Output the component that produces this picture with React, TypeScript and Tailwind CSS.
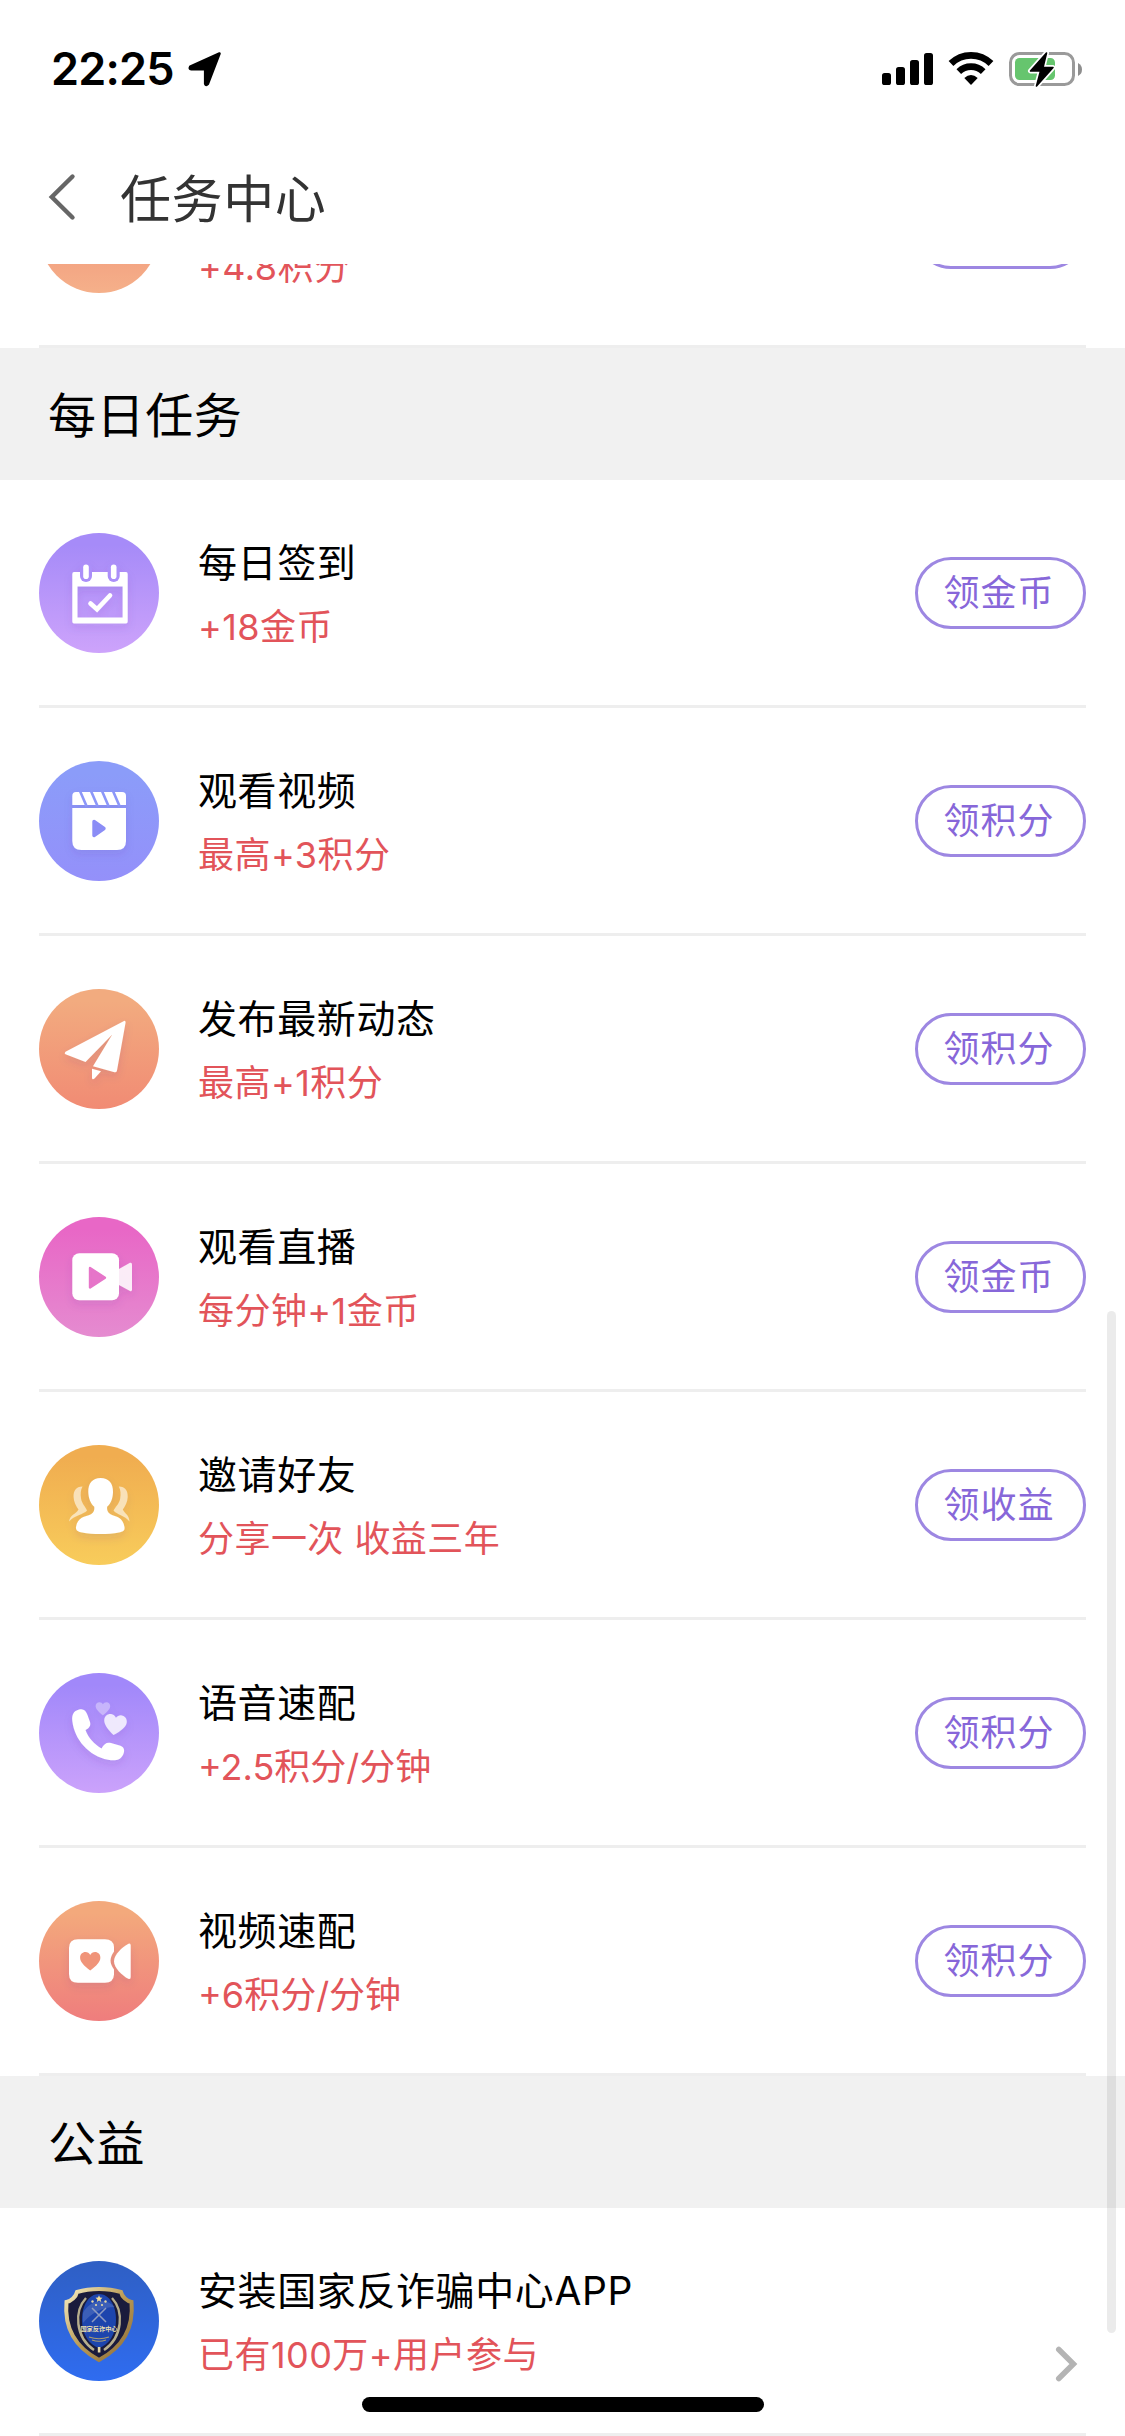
import React from 'react';

interface Task {
    id: string;
    title: string;
    reward: string;
    action?: string;
    compact?: boolean;
    icon: React.ReactNode;
}

interface IconCircleProps {
    id: string;
    from: string;
    to: string;
    children?: React.ReactNode;
}

const HEART = 'M12 21C5 15.5 1 11.5 1 7C1 3.5 3.6 1 6.8 1C9 1 11 2.2 12 4C13 2.2 15 1 17.2 1C20.4 1 23 3.5 23 7C23 11.5 19 15.5 12 21Z';

const IconCircle: React.FC<IconCircleProps> = ({ id, from, to, children }) => (
    <svg viewBox="0 0 120 120" className="w-[120px] h-[120px] shrink-0">
        <defs>
            <linearGradient id={`bg-${id}`} x1="0" y1="0" x2="0" y2="1">
                <stop offset="0.1" stopColor={from} />
                <stop offset="1" stopColor={to} />
            </linearGradient>
            <filter id={`shadow-${id}`} x="-30%" y="-30%" width="160%" height="160%">
                <feDropShadow dx="0" dy="4" stdDeviation="4" floodColor="#5a2a9a" floodOpacity="0.12" />
            </filter>
        </defs>
        <circle cx="60" cy="60" r="60" fill={`url(#bg-${id})`} />
        <g filter={`url(#shadow-${id})`}>{children}</g>
    </svg>
);

const SignInIcon = () => (
    <IconCircle id="sign" from="#a68bf8" to="#cda3fb">
        <path
            fillRule="evenodd"
            fill="#fff"
            d="M35 39H87Q88.7 39 88.7 41V88.5Q88.7 90.4 87 90.4H35Q33.3 90.4 33.3 88.5V41Q33.3 39 35 39ZM38.5 53.5V84.6H83.6V53.5Z"
        />
        <rect x="41" y="30" width="12" height="19" rx="6" fill="#ab8ff9" />
        <rect x="68.7" y="30" width="12" height="19" rx="6" fill="#ab8ff9" />
        <rect x="44.2" y="31.5" width="5.6" height="14.5" rx="2.8" fill="#fff" />
        <rect x="71.9" y="31.5" width="5.6" height="14.5" rx="2.8" fill="#fff" />
        <path d="M51.5 70.5L58 76.3L71 62.5" fill="none" stroke="#fff" strokeWidth="4.6" strokeLinecap="round" />
    </IconCircle>
);

const ClapperIcon = () => (
    <IconCircle id="clapper" from="#8b9cf9" to="#9490fa">
        <path d="M33.3 47H87V80Q87 89 78 89H42.5Q33.3 89 33.3 80Z" fill="#fff" />
        <path d="M37 31H83Q87 31 87 35V44H33.3V35Q33.3 31 37 31Z" fill="#fff" />
        <path d="M41 30L47.5 45M52 30L58.5 45M63 30L69.5 45M74 30L80.5 45" stroke="#8c97f9" strokeWidth="2.6" />
        <path d="M55 60.5L65 67.5L55 74.5Z" fill="#8b8df6" stroke="#8b8df6" strokeWidth="3.4" strokeLinejoin="round" />
    </IconCircle>
);

const PlaneIcon = () => (
    <IconCircle id="plane" from="#f2ab7f" to="#f18b74">
        <path
            d="M85 32L26.5 62.8Q24.8 64.3 26.5 65.3L46.5 73L73.3 45.5L54 77.3L75.5 83.3Q77.6 83.6 78 81.5L86.6 33.5Q86.6 31.4 85 32Z"
            fill="#fff"
        />
        <path d="M53 79.8L62 82.2L55.5 89.6Q53.3 91.3 53 89Z" fill="#fff" />
    </IconCircle>
);

const LiveIcon = () => (
    <IconCircle id="live" from="#e867c6" to="#e58bd0">
        <path d="M80 52L91 45.8Q93 45.2 93 47.5V72.5Q93 74.8 91 74L80 68Z" fill="#fff" opacity="0.86" />
        <rect x="33.3" y="36.3" width="46.7" height="47" rx="7" fill="#fff" />
        <path d="M51 51L66 60.7L51 70.4Z" fill="#e674c9" stroke="#e674c9" strokeWidth="2.4" strokeLinejoin="round" />
    </IconCircle>
);

const FriendsIcon = () => (
    <IconCircle id="friends" from="#f0ad50" to="#f8cc5b">
        <g fill="#fff" opacity="0.58">
            <path d="M43.5 41.5C37 41.5 34.3 46 34.6 52C34.8 57 37 61 39.5 64.5C37.5 69 31 69.5 30 76.5C35 70.5 44.5 69.5 48 65.5C46.8 62 42.8 58.8 42 53.5C41.4 49 41.5 45 43.5 41.5Z" />
            <path d="M79.8 41.5C86.3 41.5 89 46 88.7 52C88.5 57 86.3 61 83.8 64.5C85.8 69 90 69.5 90.5 76.5C86 70.5 77.5 69.5 74.6 65.5C76.2 62 80.4 58.8 81.2 53.5C81.9 49 81.8 45 79.8 41.5Z" />
        </g>
        <path
            d="M61.6 33C53.5 33 49 38.5 49.3 47C49.5 53 51.5 58.5 55.3 61.8C55.6 65 55 67.5 52 69.3C46 72 38.5 72 37 82C36.5 86 39.5 86.8 43 87.5C54 89.5 69 89.5 80 87.5C84 86.8 86 86 85.5 82C84 72 77 72 71.5 69.3C68.5 67.5 67.8 65 68.1 61.8C72 58.5 73.8 53 74 47C74.3 38.5 69.7 33 61.6 33Z"
            fill="#fff"
        />
    </IconCircle>
);

const VoiceMatchIcon = () => (
    <IconCircle id="voice" from="#a188fa" to="#cba2fb">
        <path
            d="M40 36.5C44.5 35.2 47 37.5 48.5 42L51 49C52 52.5 50.5 55 46.5 57C49.5 65 55 71 62.5 75.5C65 70.5 68 69 72 70L81.5 72.8C85.5 74.3 86 78 84 82C81 87.5 76 88 69 86.8C50 83 35.5 67 33.3 48C32.7 41.5 34.5 38 40 36.5Z"
            fill="#fff"
        />
        <path d={HEART} transform="translate(63.5 40.5) rotate(8 12 12) scale(1.03)" fill="#fff" opacity="0.8" />
        <path d={HEART} transform="translate(56 28.5) scale(0.66)" fill="#fff" opacity="0.35" />
    </IconCircle>
);

const VideoMatchIcon = () => (
    <IconCircle id="video" from="#f3a97c" to="#ef7d7d">
        <path
            d="M39 38.2H66Q74.5 38.2 75 46V50.5Q71.5 55.5 71.5 59.5T75 68.5V73.5Q74.5 81.8 66 81.8H39Q30 81.8 30 73V47Q30 38.2 39 38.2Z"
            fill="#fff"
        />
        <path d="M89.5 42.7Q91.7 41.8 91.7 44.5V76Q91.7 78.8 89.3 77.8C83 74.5 75 66.5 75 60.2S83 46 89.5 42.7Z" fill="#fff" />
        <path d={HEART} transform="translate(40.2 50.2) scale(0.92)" fill="#f09479" />
    </IconCircle>
);

const AntiFraudIcon = () => (
    <svg viewBox="0 0 120 120" className="w-[120px] h-[120px] shrink-0">
        <defs>
            <linearGradient id="fraud-bg" x1="0" y1="0" x2="0" y2="1">
                <stop offset="0" stopColor="#2f5fc4" />
                <stop offset="1" stopColor="#2f6cf0" />
            </linearGradient>
            <linearGradient id="fraud-gold" x1="0" y1="0" x2="1" y2="1">
                <stop offset="0" stopColor="#f6ecc0" />
                <stop offset="0.5" stopColor="#b99a55" />
                <stop offset="1" stopColor="#8a6a38" />
            </linearGradient>
        </defs>
        <circle cx="60" cy="60" r="60" fill="url(#fraud-bg)" />
        <path
            d="M60 28C52 28 43 29.5 38 31C37 36 32 40 27.5 41C25.5 63 32 84 60 99C88 84 94.5 63 92.5 41C88 40 83 36 82 31C77 29.5 68 28 60 28Z"
            fill="#1a1b3c"
            stroke="url(#fraud-gold)"
            strokeWidth="4"
        />
        <path d="M60 33C50 33 43 44 43 59C43 73 50 84 60 87C70 84 77 73 77 59C77 44 70 33 60 33Z" fill="#1d45ad" />
        <path d="M44 52C50 40 66 36 76 46C64 46 52 52 44 62Z" fill="#fff" opacity="0.14" />
        <path d="M47 37C35 50 36 76 55 89M73 37C85 50 84 76 65 89" fill="none" stroke="#b7ae8c" strokeWidth="2.4" />
        <path d="M53 47L67 61M67 47L53 61" stroke="#8f9cc0" strokeWidth="1.5" />
        <path d="M60 34.2L61 36.6L63.5 36.8L61.6 38.4L62.2 41L60 39.6L57.8 41L58.4 38.4L56.5 36.8L59 36.6Z" fill="#f3df9a" />
        <g fill="#e3d7a8">
            <circle cx="53.5" cy="40.5" r="1.2" />
            <circle cx="66.5" cy="40.5" r="1.2" />
            <circle cx="57" cy="44" r="1.1" />
            <circle cx="63" cy="44" r="1.1" />
            <rect x="58.8" y="86" width="2.6" height="5.5" />
        </g>
        <text x="60" y="70" textAnchor="middle" fontSize="6.2" fontWeight="700" fill="#e9dfae">国家反诈中心</text>
        <path d="M50 76Q60 79.5 70 76M53 79Q60 81.5 67 79" fill="none" stroke="#a99d74" strokeWidth="1.2" />
    </svg>
);

const dailyTasks: Task[] = [
    { id: 'sign', title: '每日签到', reward: '+18金币', action: '领金币', icon: <SignInIcon /> },
    { id: 'watch', title: '观看视频', reward: '最高+3积分', action: '领积分', icon: <ClapperIcon /> },
    { id: 'post', title: '发布最新动态', reward: '最高+1积分', action: '领积分', icon: <PlaneIcon /> },
    { id: 'live', title: '观看直播', reward: '每分钟+1金币', action: '领金币', icon: <LiveIcon /> },
    { id: 'invite', title: '邀请好友', reward: '分享一次 收益三年', action: '领收益', icon: <FriendsIcon /> },
    { id: 'voice', title: '语音速配', reward: '+2.5积分/分钟', action: '领积分', compact: true, icon: <VoiceMatchIcon /> },
    { id: 'video', title: '视频速配', reward: '+6积分/分钟', action: '领积分', compact: true, icon: <VideoMatchIcon /> },
];

const StatusBar = () => (
    <div className="flex h-[132px] shrink-0 items-start justify-between pt-[51px] pl-[51px] pr-[42px]">
        <div className="flex items-start">
            <span className="w-[137px] text-[45px] leading-[36px] font-semibold tracking-[-0.8px] text-black">22:25</span>
            <svg viewBox="0 0 34 36" className="w-[34px] h-[36px]">
                <path d="M31.5 2.5L2.2 15.8Q1 18 3.2 18.2H16.5Q17.2 18.3 17.2 19V32.8Q18 35 19.8 33Z" fill="#000" stroke="#000" strokeWidth="2.6" strokeLinejoin="round" />
            </svg>
        </div>
        <svg viewBox="0 0 201 38" className="w-[201px] h-[38px]">
            <rect x="0" y="22" width="9" height="12" rx="2.6" />
            <rect x="14" y="16" width="9" height="18" rx="2.6" />
            <rect x="28" y="9" width="9" height="25" rx="2.6" />
            <rect x="42" y="2" width="9" height="32" rx="2.6" />
            <path d="M69 12.5A28.5 28.5 0 0 1 109 12.5" fill="none" stroke="#000" strokeWidth="6.8" />
            <path d="M76.8 20.6A17.5 17.5 0 0 1 101.2 20.6" fill="none" stroke="#000" strokeWidth="6.6" />
            <path d="M82.3 27Q89 21 95.7 27L89 34Z" />
            <rect x="128.5" y="2.5" width="63" height="31" rx="9" fill="none" stroke="#9a9a9a" strokeWidth="3" />
            <path d="M196 12Q200 14 200 18.5T196 25Z" fill="#8e8e8e" />
            <rect x="133" y="7" width="40" height="22" rx="4.5" fill="#66c56e" />
            <path d="M164.5 2L148.5 20H158.5L154.5 35L171 16.5H161Z" fill="#000" stroke="#fff" strokeWidth="5" strokeLinejoin="round" />
            <path d="M164.5 2L148.5 20H158.5L154.5 35L171 16.5H161Z" fill="#000" stroke="#000" strokeWidth="1.6" strokeLinejoin="round" />
        </svg>
    </div>
);

const SectionTitle: React.FC<{ title: string }> = ({ title }) => (
    <h2 className="flex h-[132px] shrink-0 items-center bg-[#f1f1f1] pt-[3px] pl-12 text-[48px] leading-none tracking-[0.6px] text-black">
        {title}
    </h2>
);

const TaskRow: React.FC<{ task: Task }> = ({ task }) => (
    <div className="mx-[39px] flex h-[228px] shrink-0 items-center border-b-[3px] border-[#eeeeee]">
        {task.icon}
        <div className="ml-[39px] flex flex-1 flex-col gap-[8px] pt-[4px]">
            <div className="h-[56px] text-[39px] leading-[56px] tracking-[0.6px] text-black">{task.title}</div>
            <div className={`h-[56px] text-[36px] leading-[56px] text-[#e2545a] ${task.compact ? 'tracking-[0px]' : 'tracking-[0.45px]'}`}>
                {task.reward}
            </div>
        </div>
        {task.action !== undefined ? (
            <button className="h-[72px] w-[171px] rounded-full border-[3px] border-[#9d87e2] pr-[3px] text-[36px] leading-none tracking-[1px] text-[#8767d9]">
                {task.action}
            </button>
        ) : (
            <svg viewBox="0 0 24 36" className="mt-[86px] mr-[8px] w-[24px] h-[36px]">
                <path d="M4.8 3.4L19.4 18L4.8 32.6" fill="none" stroke="#b4b4b4" strokeWidth="5.6" strokeLinecap="round" />
            </svg>
        )}
    </div>
);

const App: React.FC = () => {
    return (
        <div className="relative flex h-[2436px] w-[1125px] flex-col overflow-hidden bg-white font-['Inter','Noto_Sans_CJK_SC',sans-serif]">
            <StatusBar />

            {/* Header */}
            <div className="flex h-[132px] shrink-0 items-center pl-12">
                <svg viewBox="0 0 28 48" className="mb-[3px] w-[28px] h-[48px]">
                    <path d="M24.5 3.5L3.8 24L24.5 44.5" fill="none" stroke="#666" strokeWidth="4.4" strokeLinecap="round" />
                </svg>
                <h1 className="ml-[44px] pt-[2px] text-[51px] leading-none tracking-[0.6px] text-[#333]">任务中心</h1>
            </div>

            {/* Task list, scrolled under the header */}
            <div className="flex flex-1 flex-col overflow-hidden">
                <div className="-mt-[144px] flex flex-col">
                    <TaskRow
                        task={{
                            id: 'prev',
                            title: '',
                            reward: '+4.8积分',
                            action: '',
                            icon: <IconCircle id="prev" from="#f08a72" to="#f5b08a" />,
                        }}
                    />
                    <SectionTitle title="每日任务" />
                    {dailyTasks.map(task => (
                        <TaskRow key={task.id} task={task} />
                    ))}
                    <SectionTitle title="公益" />
                    <TaskRow
                        task={{
                            id: 'fraud',
                            title: '安装国家反诈骗中心APP',
                            reward: '已有100万+用户参与',
                            icon: <AntiFraudIcon />,
                        }}
                    />
                </div>
            </div>

            {/* Scroll thumb */}
            <div className="absolute top-[1311px] right-[9px] h-[1022px] w-[9px] rounded-full bg-black/8" />
            {/* Home indicator */}
            <div className="absolute bottom-[24px] left-[362px] h-[15px] w-[402px] rounded-full bg-black" />
        </div>
    );
};

export default App;
